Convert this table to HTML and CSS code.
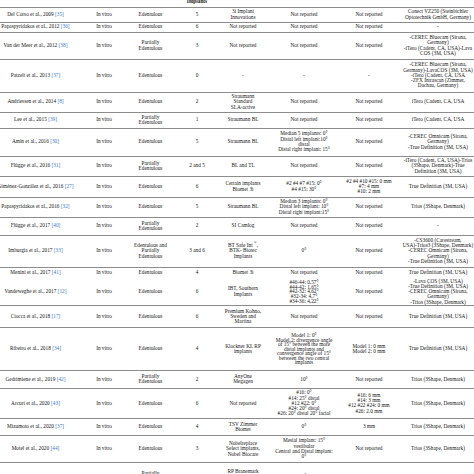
FILE: index.html
```html
<!DOCTYPE html>
<html>
<head>
<meta charset="utf-8">
<link rel="stylesheet" href="styles.css">
</head>
<body>
<div class="wrap">
<table class="data">
<colgroup>
<col class="c1"><col class="c2"><col class="c3"><col class="c4"><col class="c5"><col class="c6"><col class="c7"><col class="c8">
</colgroup>
<thead>
<tr>
<th></th><th></th><th></th><th class="last"><span class="head-text">Implants</span></th><th></th><th></th><th></th><th></th>
</tr>
</thead>
<tbody>
<tr><td>Del Corso et al., 2009 <span class="cite">[35]</span></td><td>In vitro</td><td>Edentulous</td><td>5</td><td>3i Implant<br>Innovations</td><td>Not reported</td><td>Not reported</td><td>Conect VZ250 (Steinbichler<br>Optotechnik GmbH, Germany)</td></tr>
<tr><td>Papaspyridakos et al., 2012 <span class="cite">[36]</span></td><td>In vitro</td><td>Edentulous</td><td>6</td><td>Not reported</td><td>Not reported</td><td>Not reported</td><td>-</td></tr>
<tr><td>Van der Meer et al., 2012 <span class="cite">[38]</span></td><td>In vitro</td><td>Partially<br>Edentulous</td><td>3</td><td>Not reported</td><td>Not reported</td><td>Not reported</td><td>-CEREC Bluecam (Sirona,<br>Germany)<br>-iTero (Cadent, CA, USA)-Lava<br>COS (3M, USA)</td></tr>
<tr><td>Patzelt et al., 2013 <span class="cite">[37]</span></td><td>In vitro</td><td>Edentulous</td><td>0</td><td>-</td><td>-</td><td>-</td><td>-CEREC Bluecam (Sirona,<br>Germany)-LavaCOS (3M, USA)<br>-iTero (Cadent, CA, USA<br>-ZFX Intrascan (Zimmer,<br>Dachau, Germany)</td></tr>
<tr><td>Andriessen et al., 2014 <span class="cite">[8]</span></td><td>In vitro</td><td>Edentulous</td><td>2</td><td>Straumann<br>Standard<br>SLA-active</td><td>Not reported</td><td>Not reported</td><td>iTero (Cadent, CA, USA</td></tr>
<tr><td>Lee et al., 2015 <span class="cite">[39]</span></td><td>In vitro</td><td>Partially<br>Edentulous</td><td>1</td><td>Straumann BL</td><td>Not reported</td><td>Not reported</td><td>iTero (Cadent, CA, USA</td></tr>
<tr><td>Amin et al., 2016 <span class="cite">[30]</span></td><td>In vitro</td><td>Edentulous</td><td>5</td><td>Straumann BL</td><td>Median 5 implants: 0°<br>Distal left implant:10°<br>distal<br>Distal right implant: 15°</td><td>Not reported</td><td>-CEREC Omnicam (Sirona,<br>Germany)<br>-True Definition (3M, USA)</td></tr>
<tr><td>Flügge et al., 2016 <span class="cite">[31]</span></td><td>In vitro</td><td>Partially<br>Edentulous</td><td>2 and 5</td><td>BL and TL</td><td>Not reported</td><td>Not reported</td><td>-iTero (Cadent, CA, USA)-Trios<br>(3Shape, Denmark)-True<br>Definition (3M, USA)</td></tr>
<tr><td>Giménez-González et al., 2016 <span class="cite">[27]</span></td><td>In vitro</td><td>Edentulous</td><td>6</td><td>Certain implants<br>Biomet 3i</td><td>#2 #4 #7 #15: 0°<br>#4 #15: 30°</td><td>#2 #4 #10 #15: 0 mm<br>#7: 4 mm<br>#10: 2 mm</td><td>True Definition (3M, USA)</td></tr>
<tr><td>Papaspyridakos et al., 2016 <span class="cite">[32]</span></td><td>In vitro</td><td>Edentulous</td><td>5</td><td>Straumann BL</td><td>Median 3 implants: 0°<br>Distal left implant: 10°<br>Distal right implant:15°</td><td>Not reported</td><td>Trios (3Shape, Denmark)</td></tr>
<tr><td>Flügge et al., 2017 <span class="cite">[40]</span></td><td>In vitro</td><td>Partially<br>Edentulous</td><td>2</td><td>SI Camlog</td><td>Not reported</td><td>Not reported</td><td>-</td></tr>
<tr><td>Imburgia et al., 2017 <span class="cite">[33]</span></td><td>In vitro</td><td>Edentulous and<br>Partially<br>Edentulous</td><td>3 and 6</td><td>BT Safe Int <sup>®</sup>,<br>BTK- Biotec<br>Implants</td><td>0°</td><td>Not reported</td><td>-CS3600 (Carestream,<br>USA)-Trios3 (3Shape, Denmark)<br>-CEREC Omnicam (Sirona,<br>Germany)<br>-True Definition (3M, USA)</td></tr>
<tr class="open"><td>Menini et al., 2017 <span class="cite">[41]</span></td><td>In vitro</td><td>Edentulous</td><td>4</td><td>Biomet 3i</td><td>Not reported</td><td>Not reported</td><td>True Definition (3M, USA)</td></tr>
<tr><td>Vandeweghe et al., 2017 <span class="cite">[12]</span></td><td>In vitro</td><td>Edentulous</td><td>6</td><td>IBT, Southern<br>Implants</td><td class="tight">#46-44: 0,57°<br>#44-42: 1,65°<br>#42-32: 4,62°<br>#32-34: 4,7°<br>#34-36: 4,22°</td><td>Not reported</td><td>-Lava COS (3M, USA)<br>-True Definition (3M, USA)<br>-CEREC Omnicam (Sirona,<br>Germany)<br>-Trios (3Shape, Denmark)</td></tr>
<tr><td>Ciocca et al., 2018 <span class="cite">[17]</span></td><td>In vitro</td><td>Edentulous</td><td>6</td><td>Premium Kohno,<br>Sweden and<br>Martina</td><td>Not reported</td><td>Not reported</td><td>True Definition (3M, USA)</td></tr>
<tr><td>Ribeiro et al., 2018 <span class="cite">[34]</span></td><td>In vitro</td><td>Edentulous</td><td>4</td><td>Klockner KL RP<br>implants</td><td class="tight">Model 1: 0°<br>Model 2: divergence angle<br>of 15° between the more<br>distal implants and<br>convergence angle of 15°<br>between the two central<br>implants</td><td>Model 1: 0 mm<br>Model 2: 0 mm</td><td>True Definition (3M, USA)</td></tr>
<tr><td>Gedrimiene et al., 2019 <span class="cite">[42]</span></td><td>In vitro</td><td>Partially<br>Edentulous</td><td>2</td><td>AnyOne<br>Megagen</td><td>10°</td><td>Not reported</td><td>Trios (3Shape, Denmark)</td></tr>
<tr><td>Arcuri et al., 2020 <span class="cite">[43]</span></td><td>In vitro</td><td>Edentulous</td><td>6</td><td>Not reported</td><td>#16: 0°<br>#14: 25° distal<br>#12 #22: 0°<br>#24: 20° distal<br>#26: 20° distal 20° facial</td><td>#16: 6 mm<br>#14: 3 mm<br>#12 #22 #24: 0 mm<br>#26: 2.0 mm</td><td>Trios (3Shape, Denmark)</td></tr>
<tr><td>Mizumoto et al., 2020 <span class="cite">[37]</span></td><td>In vitro</td><td>Edentulous</td><td>4</td><td>TSV Zimmer<br>Biomet</td><td>0°</td><td>3 mm</td><td>Trios (3Shape, Denmark)</td></tr>
<tr><td>Motel et al., 2020 <span class="cite">[44]</span></td><td>In vitro</td><td>Edentulous</td><td>3</td><td>Nobelreplace<br>Select implants,<br>Nobel Biocare</td><td>Mesial implant: 15°<br>vestibular<br>Central and Distal implant:<br>0°</td><td>Not reported</td><td>Trios (3Shape, Denmark)</td></tr>
<tr><td>Revilla-León et al., 2020 <span class="cite">[45]</span></td><td>In vitro</td><td>Partially<br>Edentulous</td><td>5</td><td>RP Branemark<br>system, Nobel<br>Biocare</td><td>0°</td><td>Not reported</td><td>-</td></tr>
</tbody>
</table>
</div>
</body>
</html>
```
FILE: styles.css
```css
html, body {
  margin: 0;
  padding: 0;
  background: #ffffff;
  overflow: hidden;
}

.wrap {
  width: 474px;
  height: 474px;
  overflow: hidden;
}

.data {
  border-collapse: collapse;
  table-layout: fixed;
  width: 490px;
  margin: -17px 0 0 -6px;
  font-family: "Liberation Serif", "Times New Roman", serif;
  font-size: 5.3px;
  line-height: 5.3px;
  color: #151515;
}

.c1 { width: 83px; }
.c2 { width: 54px; }
.c3 { width: 39px; }
.c4 { width: 54px; }
.c5 { width: 38px; }
.c6 { width: 84px; }
.c7 { width: 46px; }
.c8 { width: 92px; }

.data th,
.data td {
  padding: 0;
  text-align: center;
  vertical-align: middle;
  white-space: nowrap;
  border-bottom: 1px solid #8c8c8c;
}

.data tr.open td {
  border-bottom: 1px solid #ffffff;
}

.data thead tr {
  height: 24px;
}

.data th {
  font-weight: bold;
}

.data th.last {
  vertical-align: bottom;
}

.head-text {
  display: block;
  margin-bottom: 2px;
}

.data td.tight {
  line-height: 4.6px;
}

.data sup {
  font-size: 3.5px;
  line-height: 0;
}

.cite {
  color: #3d79c9;
}

.data tbody tr:nth-child(1) { height: 15px; }
.data tbody tr:nth-child(2) { height: 10px; }
.data tbody tr:nth-child(3) { height: 27px; }
.data tbody tr:nth-child(4) { height: 33px; }
.data tbody tr:nth-child(5) { height: 20px; }
.data tbody tr:nth-child(6) { height: 16px; }
.data tbody tr:nth-child(7) { height: 28px; }
.data tbody tr:nth-child(8) { height: 20px; }
.data tbody tr:nth-child(9) { height: 21px; }
.data tbody tr:nth-child(10) { height: 20px; }
.data tbody tr:nth-child(11) { height: 18px; }
.data tbody tr:nth-child(12) { height: 32px; }
.data tbody tr:nth-child(13) { height: 11px; }
.data tbody tr:nth-child(14) { height: 26px; }
.data tbody tr:nth-child(15) { height: 22px; }
.data tbody tr:nth-child(16) { height: 43px; }
.data tbody tr:nth-child(17) { height: 18px; }
.data tbody tr:nth-child(18) { height: 30px; }
.data tbody tr:nth-child(19) { height: 17px; }
.data tbody tr:nth-child(20) { height: 27px; }
.data tbody tr:nth-child(21) { height: 28px; }
```
